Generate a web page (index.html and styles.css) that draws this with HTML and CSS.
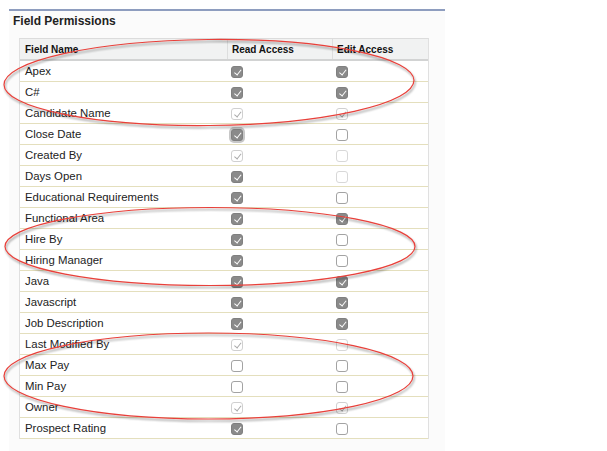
FILE: index.html
```html
<!DOCTYPE html>
<html>
<head>
<meta charset="utf-8">
<link rel="stylesheet" href="styles.css">
</head>
<body>
<div class="page">
  <div class="panel">
    <h2 class="title">Field Permissions</h2>
    <div class="grid">
      <div class="row head">
        <div class="c c1">Field Name</div>
        <div class="c c2">Read Access</div>
        <div class="c c3">Edit Access</div>
      </div>
      <div class="row"><div class="c c1">Apex</div><div class="c c2"><span class="cb on"></span></div><div class="c c3"><span class="cb on"></span></div></div>
      <div class="row"><div class="c c1">C#</div><div class="c c2"><span class="cb on"></span></div><div class="c c3"><span class="cb on"></span></div></div>
      <div class="row"><div class="c c1">Candidate Name</div><div class="c c2"><span class="cb dis on"></span></div><div class="c c3"><span class="cb dis on"></span></div></div>
      <div class="row"><div class="c c1">Close Date</div><div class="c c2"><span class="cb on focus"></span></div><div class="c c3"><span class="cb"></span></div></div>
      <div class="row"><div class="c c1">Created By</div><div class="c c2"><span class="cb dis on"></span></div><div class="c c3"><span class="cb dis"></span></div></div>
      <div class="row"><div class="c c1">Days Open</div><div class="c c2"><span class="cb on"></span></div><div class="c c3"><span class="cb dis"></span></div></div>
      <div class="row"><div class="c c1">Educational Requirements</div><div class="c c2"><span class="cb on"></span></div><div class="c c3"><span class="cb"></span></div></div>
      <div class="row"><div class="c c1">Functional Area</div><div class="c c2"><span class="cb on"></span></div><div class="c c3"><span class="cb on"></span></div></div>
      <div class="row"><div class="c c1">Hire By</div><div class="c c2"><span class="cb on"></span></div><div class="c c3"><span class="cb"></span></div></div>
      <div class="row"><div class="c c1">Hiring Manager</div><div class="c c2"><span class="cb on"></span></div><div class="c c3"><span class="cb"></span></div></div>
      <div class="row"><div class="c c1">Java</div><div class="c c2"><span class="cb on"></span></div><div class="c c3"><span class="cb on"></span></div></div>
      <div class="row"><div class="c c1">Javascript</div><div class="c c2"><span class="cb on"></span></div><div class="c c3"><span class="cb on"></span></div></div>
      <div class="row"><div class="c c1">Job Description</div><div class="c c2"><span class="cb on"></span></div><div class="c c3"><span class="cb on"></span></div></div>
      <div class="row"><div class="c c1">Last Modified By</div><div class="c c2"><span class="cb dis on"></span></div><div class="c c3"><span class="cb dis"></span></div></div>
      <div class="row"><div class="c c1">Max Pay</div><div class="c c2"><span class="cb"></span></div><div class="c c3"><span class="cb"></span></div></div>
      <div class="row"><div class="c c1">Min Pay</div><div class="c c2"><span class="cb"></span></div><div class="c c3"><span class="cb"></span></div></div>
      <div class="row"><div class="c c1">Owner</div><div class="c c2"><span class="cb dis on"></span></div><div class="c c3"><span class="cb dis on"></span></div></div>
      <div class="row"><div class="c c1">Prospect Rating</div><div class="c c2"><span class="cb on"></span></div><div class="c c3"><span class="cb"></span></div></div>
    </div>
  </div>
</div>
<svg class="marks" width="607" height="451" viewBox="0 0 607 451">
  <defs>
    <filter id="sh" x="-10%" y="-20%" width="120%" height="140%">
      <feDropShadow dx="1" dy="2" stdDeviation="1.2" flood-color="#000" flood-opacity="0.45"/>
    </filter>
  </defs>
  <g fill="none" stroke="#e8403a" stroke-width="1.2" filter="url(#sh)">
    <ellipse cx="209" cy="82.5" rx="205" ry="43" transform="rotate(-0.6 209 82.5)"/>
    <ellipse cx="210" cy="246.5" rx="205" ry="39"/>
    <ellipse cx="208.5" cy="376" rx="204.5" ry="43"/>
  </g>
</svg>
</body>
</html>
```

FILE: styles.css
```css
html, body {
  margin: 0;
  padding: 0;
  background: #fff;
}
body {
  font-family: "Liberation Sans", Arial, sans-serif;
  color: #222;
}
.page {
  padding: 9px 0 0 9px;
}
.panel {
  width: 436px;
  min-height: 440px;
  background: #fbfbfb;
  border-top: 2px solid #8e9dbf;
}
.title {
  margin: 0;
  padding: 3px 0 0 4px;
  height: 24px;
  font-size: 12px;
  line-height: 14px;
  font-weight: bold;
  color: #222;
}
.grid {
  margin-left: 10px;
  width: 410px;
  box-sizing: border-box;
  border-top: 1px solid #dcdcdc;
  border-left: 1px solid #e0e0e0;
  border-right: 1px solid #e0e0e0;
  background: #fff;
}
.row {
  display: grid;
  grid-template-columns: 207px 105px 96px;
  height: 21px;
  box-sizing: border-box;
  border-bottom: 1px solid #e4dfbd;
}
.row.head {
  height: 22px;
  background: #f1f2f2;
  border-bottom: 2px solid #d2d3d3;
}
.c {
  display: flex;
  align-items: center;
  font-size: 11.4px;
  white-space: nowrap;
}
.c1 { padding-left: 5px; }
.c2, .c3 {
  padding-left: 3px;
  border-left: 1px solid transparent;
}
.head .c {
  font-size: 10px;
  font-weight: bold;
  color: #111;
}
.head .c2, .head .c3 {
  padding-left: 4px;
  border-left-color: #dddede;
}
.cb {
  position: relative;
  display: inline-block;
  width: 12px;
  height: 12px;
  box-sizing: border-box;
  border: 1px solid #a3a3a3;
  border-radius: 3px;
  background: #fff;
  margin-top: 1px;
}
.cb.dis {
  border-color: #d8d8d8;
}
.cb.on {
  background: #8a8a8a;
  border-color: #808080;
}
.cb.on::after {
  content: "";
  position: absolute;
  left: 3.5px;
  top: 1.2px;
  width: 2.6px;
  height: 5.5px;
  border: solid #fff;
  border-width: 0 1.6px 1.6px 0;
  transform: rotate(38deg);
}
.cb.dis.on {
  background: #fff;
  border-color: #d0d0d0;
}
.cb.dis.on::after {
  border-color: #a8a8a8;
  border-width: 0 1.3px 1.3px 0;
}
.cb.focus {
  box-shadow: 0 0 0 2px rgba(130, 130, 130, 0.45);
}
.marks {
  position: absolute;
  left: 0;
  top: 0;
  pointer-events: none;
}
```
